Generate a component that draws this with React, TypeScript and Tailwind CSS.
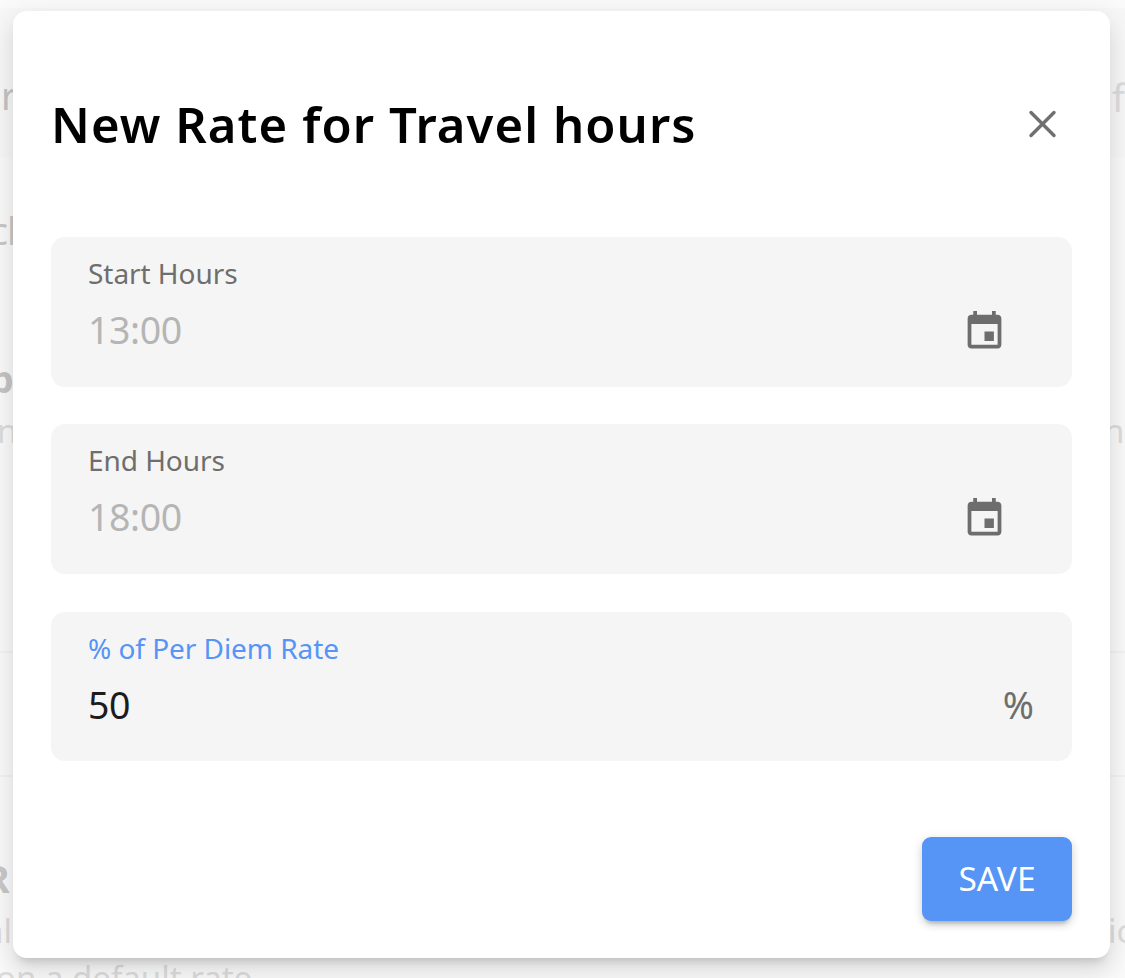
import type { ReactNode } from "react";

function EventIcon() {
  return (
    <svg viewBox="0 0 24 24" className="size-[45px] fill-[#6d6d6d]" aria-hidden="true">
      <path d="M17 12h-5v5h5v-5zM16 1v2H8V1H6v2H5c-1.11 0-1.99.9-1.99 2L3 19c0 1.1.89 2 2 2h14c1.1 0 2-.9 2-2V5c0-1.1-.9-2-2-2h-1V1h-2zm3 18H5V8h14v11z" />
    </svg>
  );
}

function Field({
  label,
  value,
  labelClass,
  valueClass,
  children,
}: {
  label: string;
  value: string;
  labelClass: string;
  valueClass: string;
  children: ReactNode;
}) {
  return (
    <div className="flex h-[149.5px] items-start justify-between rounded-[14px] bg-[#f5f5f5] pl-[37px]">
      <div className="flex flex-col pt-[17px]">
        <span className={`text-[28px] leading-[38px] tracking-[-0.05px] ${labelClass}`}>{label}</span>
        <span className={`mt-[12px] text-[37.5px] leading-[52px] tracking-[-0.4px] ${valueClass}`}>{value}</span>
      </div>
      {children}
    </div>
  );
}

function PageBehind() {
  return (
    <div className="flex h-full flex-col overflow-hidden bg-[#f9f9f9] text-[33px] leading-[52px] whitespace-nowrap text-[#dcdcdc]">
      <div className="h-[8px] shrink-0 bg-[#fafafa]" />
      <div className="flex h-[149px] shrink-0 justify-between bg-[#f7f7f7] pt-[62px] text-[37.5px]">
        <span className="pl-[1px] text-[#c4c4c4]">r</span>
        <span className="w-[13px] pt-[2px]">f</span>
      </div>
      <div className="h-[196px] shrink-0 pt-[48px] text-[37.5px] text-[#c8c8c8]">
        <span className="-ml-[10px] tracking-[-1px]">cl</span>
      </div>
      <div className="h-[52px] shrink-0 text-[37.5px] font-bold text-[#c4c4c4]">
        <span className="-ml-[10px]">p</span>
      </div>
      <div className="flex h-[246px] shrink-0 justify-between">
        <span className="-ml-[3px]">n</span>
        <span className="w-[21px]">n</span>
      </div>
      <div className="h-[126px] shrink-0 border-y-2 border-[#f2f2f2]" />
      <div className="h-[128px] shrink-0 pt-[76px] text-[37.5px] font-bold text-[#c8c8c8]">
        <span className="-ml-[15px]">R</span>
      </div>
      <div className="flex h-[47px] shrink-0 justify-between">
        <span className="-ml-[15px]">al</span>
        <span className="w-[17px]">ic</span>
      </div>
      <div className="-ml-[4px] shrink-0">on a default rate</div>
    </div>
  );
}

export default function App() {
  return (
    <div className="relative h-[978px] w-[1125px] overflow-hidden font-['Noto_Sans',sans-serif]">
      <PageBehind />
      <div
        role="dialog"
        className="absolute top-[11px] left-[13px] flex h-[947px] w-[1097px] flex-col rounded-[14px] bg-white px-[38px] pt-[78px] shadow-[0_9px_9px_-6px_rgba(0,0,0,0.15),0_15px_19px_2px_rgba(0,0,0,0.05),0_6px_26px_4px_rgba(0,0,0,0.07)]"
      >
        <div className="flex h-[148px] items-start justify-between">
          <h1 className="text-[49px] leading-[70px] font-semibold tracking-[1.08px] whitespace-nowrap text-black">
            New Rate for Travel hours
          </h1>
          <button aria-label="Close" className="mt-[20px] mr-[15px]">
            <svg viewBox="0 0 30 30" className="size-[30px]" fill="none" stroke="#6f6f6f" strokeWidth="3.4" strokeLinecap="round">
              <path d="M4 3.5 27 26.5M27 3.5 4 26.5" />
            </svg>
          </button>
        </div>
        <div className="flex flex-col gap-[37.9px]">
          <Field label="Start Hours" value="13:00" labelClass="text-[#6e6e6e]" valueClass="text-[#b5b5b5]">
            <div className="mt-[72px] mr-[65px]">
              <EventIcon />
            </div>
          </Field>
          <Field label="End Hours" value="18:00" labelClass="text-[#6e6e6e]" valueClass="text-[#b5b5b5]">
            <div className="mt-[72px] mr-[65px]">
              <EventIcon />
            </div>
          </Field>
          <Field label="% of Per Diem Rate" value="50" labelClass="text-[#5694f6]" valueClass="text-[#1c1c1c]">
            <span className="mt-[67px] mr-[38px] text-[37.5px] leading-[52px] text-[#6e6e6e]">%</span>
          </Field>
        </div>
        <button className="mt-[75.5px] h-[84px] w-[150px] self-end rounded-[9px] bg-[#5694f6] pb-[2px] text-[33.5px] text-white shadow-[0_6px_4px_-4px_rgba(0,0,0,0.2),0_4px_8px_rgba(0,0,0,0.12),0_2px_12px_rgba(0,0,0,0.08)]">
          SAVE
        </button>
      </div>
    </div>
  );
}
